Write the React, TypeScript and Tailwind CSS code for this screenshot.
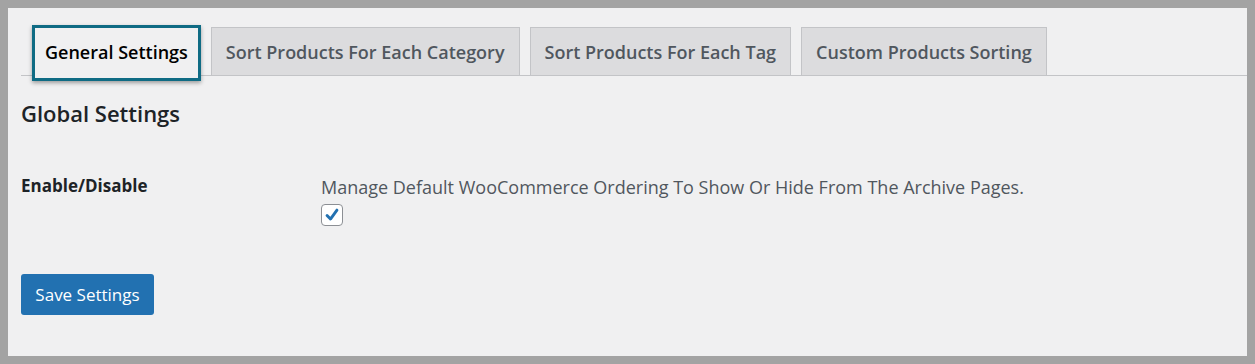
import { useState } from 'react';

const tabs = [
  'General Settings',
  'Sort Products For Each Category',
  'Sort Products For Each Tag',
  'Custom Products Sorting',
];

export default function App() {
  const [active, setActive] = useState(0);
  const [enabled, setEnabled] = useState(true);

  return (
    <div className="h-[364px] w-full bg-[#a3a3a3] p-2" style={{ fontFamily: '"Open Sans", "Noto Sans", sans-serif' }}>
      <div className="h-full bg-[#f0f0f1] pl-[13px] pt-[19px]">
        {/* Tabs */}
        <div className="flex items-end gap-[10px] border-b border-[#c3c4c7] pl-[11px]">
          {tabs.map((tab, i) => (
            <button
              key={tab}
              onClick={() => setActive(i)}
              className={`relative -mb-px h-[49px] border text-[18px] font-semibold leading-none ${
                i === active
                  ? 'border-[#c3c4c7] border-b-[#f0f0f1] bg-[#f0f0f1] px-[12px] text-black'
                  : 'border-[#c3c4c7] bg-[#dcdcde] px-[14px] text-[#50575e]'
              }`}
            >
              {tab}
              {i === active && (
                <span className="pointer-events-none absolute -top-[3px] -bottom-[6px] -left-px -right-px border-[3px] border-[#0f6b84] shadow-[0_2px_4px_rgba(0,0,0,0.35)]" />
              )}
            </button>
          ))}
        </div>

        {/* Content */}
        <div className="pr-[13px]">
          <h2 className="mt-[24px] text-[22px] font-semibold leading-[26px] text-[#1d2327]">Global Settings</h2>

          <div className="mt-[49px] flex">
            <div className="w-[300px] text-[17px] font-bold leading-[22px] text-[#1d2327]">Enable/Disable</div>
            <div>
              <p className="text-[18px] leading-[24px] text-[#50575e]">
                Manage Default WooCommerce Ordering To Show Or Hide From The Archive Pages.
              </p>
              <button
                onClick={() => setEnabled(!enabled)}
                className="mt-[5px] flex h-[22px] w-[22px] items-center justify-center rounded-[4px] border border-[#8c8f94] bg-white"
              >
                {enabled && (
                  <svg viewBox="0 0 20 20" className="h-[18px] w-[18px]">
                    <path d="M4.5 10.5 L8.3 14.5 L15.5 4.5" fill="none" stroke="#2271b1" strokeWidth="3.2" strokeLinecap="round" strokeLinejoin="round" />
                  </svg>
                )}
              </button>
            </div>
          </div>

          <button className="mt-[48px] h-[41px] w-[133px] rounded-[3px] bg-[#2271b1] text-[17px] leading-none text-white">
            Save Settings
          </button>
        </div>
      </div>
    </div>
  );
}
